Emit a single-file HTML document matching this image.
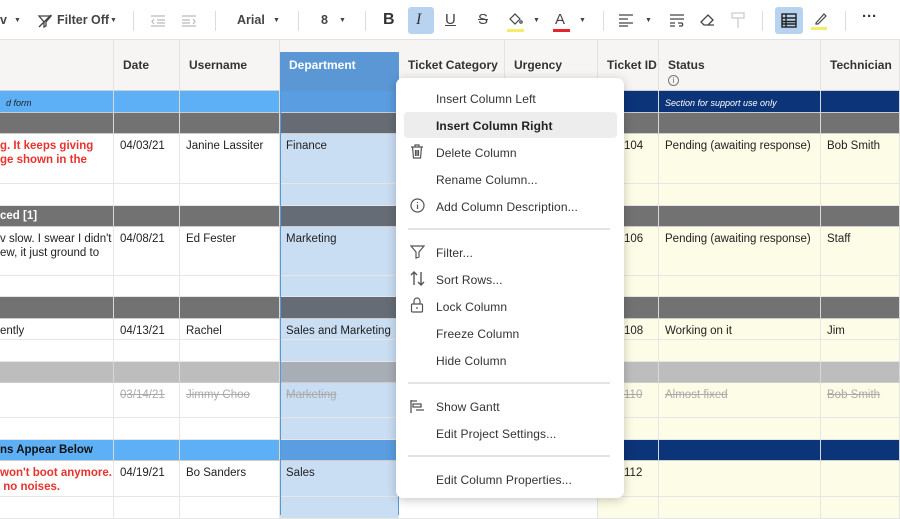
<!DOCTYPE html>
<html><head><meta charset="utf-8"><style>
*{box-sizing:border-box;margin:0;padding:0}
body{width:900px;height:515px;overflow:hidden;background:#fff;font-family:"Liberation Sans",Arial,sans-serif;font-size:12px;color:#222;position:relative}
.a{position:absolute}
.tb{left:0;top:0;width:900px;height:40px;border-bottom:1px solid #e2e2e2;background:#fff}
.tb .a{top:13px;color:#444;font-size:12.5px}
.sep{top:11px!important;width:1px;height:20px;background:#ddd}
.car{font-size:7px!important;top:17px!important;color:#555}
.hdr{left:0;top:40px;width:900px;height:51px;background:#f6f5f3;border-bottom:1px solid #cfcfcf}
.h{position:absolute;top:0;height:51px;border-right:1px solid #e3e3e3;font-weight:bold;color:#333;padding:18px 0 0 9px;font-size:12px}
.row{position:absolute;left:0;width:900px}
.c{position:absolute;top:0;bottom:0;border-right:1px solid #e6e6e6;border-bottom:1px solid #e6e6e6;padding:5px 6px;line-height:14px;white-space:nowrap;overflow:hidden;font-size:11.5px}
.band .c{border-right:1px solid #d8d8d8;border-bottom:1px solid #ccc;font-weight:bold;color:#fff;padding-top:3px}
.y{background:#fdfce6}
.d{background:#c9ddf3}
.st{color:#aaa;text-decoration:line-through}
.tid{padding-left:26px}
.menu{left:396px;top:78px;width:228px;height:420px;background:#fff;border-radius:7px;box-shadow:0 2px 10px rgba(0,0,0,.22)}
.mi{position:absolute;left:40px;font-size:12px;color:#333;letter-spacing:.1px}
.ms{position:absolute;left:12px;width:202px;height:2px;background:#e4e4e4}
.ic{position:absolute;left:14px}
</style></head><body>

<div class="a tb">
<div class="a" style="left:0;font-weight:bold">v</div><div class="a car" style="left:14px">▼</div>
<svg class="a" style="left:37px;top:13px" width="16" height="16" viewBox="0 0 16 16" fill="none" stroke="#444" stroke-width="1.3"><path d="M2 3h12l-5 6v4l-2 1V9z"/><path d="M2 14L14 2"/></svg>
<div class="a" style="left:57px;font-weight:bold">Filter Off</div><div class="a car" style="left:110px">▼</div>
<div class="a sep" style="left:133px"></div>
<svg class="a" style="left:150px;top:14px" width="16" height="14" viewBox="0 0 16 14" fill="none" stroke="#bbb" stroke-width="1.2"><path d="M1 2h14M7 6h8M7 9h8M1 12h14M4 5L2 7.5 4 10"/></svg>
<svg class="a" style="left:181px;top:14px" width="16" height="14" viewBox="0 0 16 14" fill="none" stroke="#bbb" stroke-width="1.2"><path d="M1 2h14M1 6h8M1 9h8M1 12h14M12 5l2 2.5L12 10"/></svg>
<div class="a sep" style="left:215px"></div>
<div class="a" style="left:237px;font-weight:bold">Arial</div><div class="a car" style="left:273px">▼</div>
<div class="a sep" style="left:298px"></div>
<div class="a" style="left:321px;font-weight:bold">8</div><div class="a car" style="left:339px">▼</div>
<div class="a sep" style="left:365px"></div>
<div class="a" style="left:383px;top:11px;font-weight:bold;font-size:16px;color:#333">B</div>
<div class="a" style="left:408px;top:7px;width:26px;height:27px;background:#b8d3f0;border-radius:3px"></div>
<div class="a" style="left:416px;top:11px;font-style:italic;font-size:16px;color:#333;font-family:'Liberation Serif',serif">I</div>
<div class="a" style="left:445px;top:11px;font-size:15px;text-decoration:underline;color:#444">U</div>
<div class="a" style="left:478px;top:11px;font-size:15px;text-decoration:line-through;color:#444">S</div>
<svg class="a" style="left:507px;top:11px" width="18" height="18" viewBox="0 0 18 18" fill="none" stroke="#444" stroke-width="1.2"><path d="M3 8l5-5 5 5-5 5z"/><circle cx="14" cy="11" r="1.2"/></svg>
<div class="a" style="left:507px;top:29px;width:17px;height:3px;background:#f7ec6a"></div>
<div class="a car" style="left:533px">▼</div>
<div class="a" style="left:555px;top:11px;font-size:15px;color:#444">A</div>
<div class="a" style="left:553px;top:29px;width:17px;height:3px;background:#e4252b"></div>
<div class="a car" style="left:579px">▼</div>
<div class="a sep" style="left:603px"></div>
<svg class="a" style="left:618px;top:14px" width="16" height="13" viewBox="0 0 16 13" stroke="#444" stroke-width="1.3"><path d="M1 1h14M1 5h9M1 9h14M1 12h9"/></svg>
<div class="a car" style="left:645px">▼</div>
<svg class="a" style="left:669px;top:14px" width="16" height="13" viewBox="0 0 16 13" fill="none" stroke="#444" stroke-width="1.3"><path d="M1 1h14M1 5h14M1 9h5M1 12h5M9 9h4a2 2 0 0 1 0 3h-3"/></svg>
<svg class="a" style="left:699px;top:12px" width="17" height="16" viewBox="0 0 17 16" fill="none" stroke="#444" stroke-width="1.3"><path d="M2 10l7-7 5 5-5 5H5z M5 13h10"/></svg>
<svg class="a" style="left:731px;top:12px" width="15" height="17" viewBox="0 0 15 17" fill="none" stroke="#ccc" stroke-width="1.3"><rect x="1" y="1" width="12" height="5"/><path d="M7 6v3M7 9v7"/></svg>
<div class="a sep" style="left:762px"></div>
<div class="a" style="left:775px;top:7px;width:28px;height:27px;background:#b8d3f0;border-radius:3px"></div>
<svg class="a" style="left:781px;top:13px" width="16" height="15" viewBox="0 0 16 15" fill="none" stroke="#222" stroke-width="1.4"><rect x="1" y="1" width="14" height="13"/><path d="M1 5h14M1 8.5h14M1 11h14M5 1v13"/></svg>
<svg class="a" style="left:812px;top:11px" width="16" height="15" viewBox="0 0 16 15" fill="none" stroke="#444" stroke-width="1.2"><path d="M4 12L12 3l2 2-8 8H4z"/></svg>
<div class="a" style="left:811px;top:27px;width:16px;height:3px;background:#f7ec6a"></div>
<div class="a sep" style="left:845px"></div>
<div class="a" style="left:862px;top:12px;font-size:15px;font-weight:bold;color:#333;line-height:10px">···</div>
</div>

<div class="a hdr">
<div class="h" style="left:0;width:114px"></div>
<div class="h" style="left:114px;width:66px">Date</div>
<div class="h" style="left:180px;width:100px">Username</div>
<div class="h" style="left:280px;width:119px;background:#5b97d5;color:#fff;top:12px;height:39px;padding-top:6px;border-radius:2px 2px 0 0">Department</div>
<div class="h" style="left:399px;width:106px">Ticket Category</div>
<div class="h" style="left:505px;width:93px">Urgency</div>
<div class="h" style="left:598px;width:61px">Ticket ID</div>
<div class="h" style="left:659px;width:162px">Status<br><span style="display:inline-block;width:11px;height:11px;border:1px solid #777;border-radius:50%;margin-top:3px;font-size:8px;text-align:center;line-height:9px;font-weight:normal;color:#666">i</span></div>
<div class="h" style="left:821px;width:79px">Technician</div>
</div>

<div class="row band" style="top:91px;height:22px">
<div class="c" style="left:0;width:114px;background:#5eb0f6;color:#222;font-style:italic;font-weight:normal;font-size:9px;padding-top:5px">d form</div>
<div class="c" style="left:114px;width:66px;background:#5eb0f6"></div>
<div class="c" style="left:180px;width:100px;background:#5eb0f6"></div>
<div class="c" style="left:280px;width:119px;background:#5a9de0"></div>
<div class="c" style="left:399px;width:199px;background:#5eb0f6"></div>
<div class="c" style="left:598px;width:61px;background:#0c3479"></div>
<div class="c" style="left:659px;width:162px;background:#0c3479;font-style:italic;font-weight:normal;font-size:9px;padding-top:5px">Section for support use only</div>
<div class="c" style="left:821px;width:79px;background:#0c3479"></div>
</div>

<div class="row band" style="top:113px;height:21px">
<div class="c" style="left:0;width:114px;background:#727272"></div><div class="c" style="left:114px;width:66px;background:#727272"></div><div class="c" style="left:180px;width:100px;background:#727272"></div><div class="c" style="left:280px;width:119px;background:#666c75"></div><div class="c" style="left:399px;width:260px;background:#727272"></div><div class="c" style="left:659px;width:162px;background:#727272"></div><div class="c" style="left:821px;width:79px;background:#727272"></div>
</div>

<div class="row" style="top:134px;height:50px">
<div class="c" style="left:0;width:114px;color:#e8332f;font-weight:bold;padding-left:0">g. It keeps giving<br>ge shown in the</div>
<div class="c" style="left:114px;width:66px">04/03/21</div><div class="c" style="left:180px;width:100px">Janine Lassiter</div>
<div class="c d" style="left:280px;width:119px">Finance</div><div class="c" style="left:399px;width:199px"></div>
<div class="c y tid" style="left:598px;width:61px">104</div><div class="c y" style="left:659px;width:162px">Pending (awaiting response)</div><div class="c y" style="left:821px;width:79px">Bob Smith</div>
</div>
<div class="row" style="top:184px;height:22px">
<div class="c" style="left:0;width:114px"></div><div class="c" style="left:114px;width:66px"></div><div class="c" style="left:180px;width:100px"></div><div class="c d" style="left:280px;width:119px"></div><div class="c" style="left:399px;width:199px"></div><div class="c y" style="left:598px;width:61px"></div><div class="c y" style="left:659px;width:162px"></div><div class="c y" style="left:821px;width:79px"></div>
</div>

<div class="row band" style="top:206px;height:21px">
<div class="c" style="left:0;width:114px;background:#727272;padding-left:0">ced [1]</div><div class="c" style="left:114px;width:66px;background:#727272"></div><div class="c" style="left:180px;width:100px;background:#727272"></div><div class="c" style="left:280px;width:119px;background:#666c75"></div><div class="c" style="left:399px;width:260px;background:#727272"></div><div class="c" style="left:659px;width:162px;background:#727272"></div><div class="c" style="left:821px;width:79px;background:#727272"></div>
</div>
<div class="row" style="top:227px;height:49px">
<div class="c" style="left:0;width:114px;padding-left:0">v slow. I swear I didn't<br>ew, it just ground to</div>
<div class="c" style="left:114px;width:66px">04/08/21</div><div class="c" style="left:180px;width:100px">Ed Fester</div>
<div class="c d" style="left:280px;width:119px">Marketing</div><div class="c" style="left:399px;width:199px"></div>
<div class="c y tid" style="left:598px;width:61px">106</div><div class="c y" style="left:659px;width:162px">Pending (awaiting response)</div><div class="c y" style="left:821px;width:79px">Staff</div>
</div>
<div class="row" style="top:276px;height:21px">
<div class="c" style="left:0;width:114px"></div><div class="c" style="left:114px;width:66px"></div><div class="c" style="left:180px;width:100px"></div><div class="c d" style="left:280px;width:119px"></div><div class="c" style="left:399px;width:199px"></div><div class="c y" style="left:598px;width:61px"></div><div class="c y" style="left:659px;width:162px"></div><div class="c y" style="left:821px;width:79px"></div>
</div>

<div class="row band" style="top:297px;height:22px">
<div class="c" style="left:0;width:114px;background:#727272"></div><div class="c" style="left:114px;width:66px;background:#727272"></div><div class="c" style="left:180px;width:100px;background:#727272"></div><div class="c" style="left:280px;width:119px;background:#666c75"></div><div class="c" style="left:399px;width:260px;background:#727272"></div><div class="c" style="left:659px;width:162px;background:#727272"></div><div class="c" style="left:821px;width:79px;background:#727272"></div>
</div>
<div class="row" style="top:319px;height:21px">
<div class="c" style="left:0;width:114px;padding-left:0">ently</div>
<div class="c" style="left:114px;width:66px">04/13/21</div><div class="c" style="left:180px;width:100px">Rachel</div>
<div class="c d" style="left:280px;width:119px">Sales and Marketing</div><div class="c" style="left:399px;width:199px"></div>
<div class="c y tid" style="left:598px;width:61px">108</div><div class="c y" style="left:659px;width:162px">Working on it</div><div class="c y" style="left:821px;width:79px">Jim</div>
</div>
<div class="row" style="top:340px;height:22px">
<div class="c" style="left:0;width:114px"></div><div class="c" style="left:114px;width:66px"></div><div class="c" style="left:180px;width:100px"></div><div class="c d" style="left:280px;width:119px"></div><div class="c" style="left:399px;width:199px"></div><div class="c y" style="left:598px;width:61px"></div><div class="c y" style="left:659px;width:162px"></div><div class="c y" style="left:821px;width:79px"></div>
</div>

<div class="row band" style="top:362px;height:21px">
<div class="c" style="left:0;width:114px;background:#bdbdbd"></div><div class="c" style="left:114px;width:66px;background:#bdbdbd"></div><div class="c" style="left:180px;width:100px;background:#bdbdbd"></div><div class="c" style="left:280px;width:119px;background:#a8aeb6"></div><div class="c" style="left:399px;width:260px;background:#bdbdbd"></div><div class="c" style="left:659px;width:162px;background:#bdbdbd"></div><div class="c" style="left:821px;width:79px;background:#bdbdbd"></div>
</div>
<div class="row" style="top:383px;height:35px">
<div class="c" style="left:0;width:114px"></div>
<div class="c st" style="left:114px;width:66px">03/14/21</div><div class="c st" style="left:180px;width:100px">Jimmy Choo</div>
<div class="c d st" style="left:280px;width:119px">Marketing</div><div class="c" style="left:399px;width:199px"></div>
<div class="c y st tid" style="left:598px;width:61px">110</div><div class="c y st" style="left:659px;width:162px">Almost fixed</div><div class="c y st" style="left:821px;width:79px">Bob Smith</div>
</div>
<div class="row" style="top:418px;height:22px">
<div class="c" style="left:0;width:114px"></div><div class="c" style="left:114px;width:66px"></div><div class="c" style="left:180px;width:100px"></div><div class="c d" style="left:280px;width:119px"></div><div class="c" style="left:399px;width:199px"></div><div class="c y" style="left:598px;width:61px"></div><div class="c y" style="left:659px;width:162px"></div><div class="c y" style="left:821px;width:79px"></div>
</div>

<div class="row band" style="top:440px;height:21px">
<div class="c" style="left:0;width:114px;background:#5eb0f6;color:#111;padding-left:0">ns Appear Below</div>
<div class="c" style="left:114px;width:66px;background:#5eb0f6"></div><div class="c" style="left:180px;width:100px;background:#5eb0f6"></div><div class="c" style="left:280px;width:119px;background:#5a9de0"></div><div class="c" style="left:399px;width:199px;background:#5eb0f6"></div><div class="c" style="left:598px;width:61px;background:#0c3479"></div><div class="c" style="left:659px;width:162px;background:#0c3479"></div><div class="c" style="left:821px;width:79px;background:#0c3479"></div>
</div>
<div class="row" style="top:461px;height:36px">
<div class="c" style="left:0;width:114px;color:#e8332f;font-weight:bold;padding-left:0">won't boot anymore.<br>&nbsp;no noises.</div>
<div class="c" style="left:114px;width:66px">04/19/21</div><div class="c" style="left:180px;width:100px">Bo Sanders</div>
<div class="c d" style="left:280px;width:119px">Sales</div><div class="c" style="left:399px;width:199px"></div>
<div class="c y tid" style="left:598px;width:61px">112</div><div class="c y" style="left:659px;width:162px"></div><div class="c y" style="left:821px;width:79px"></div>
</div>
<div class="row" style="top:497px;height:22px">
<div class="c" style="left:0;width:114px"></div><div class="c" style="left:114px;width:66px"></div><div class="c" style="left:180px;width:100px"></div><div class="c d" style="left:280px;width:119px"></div><div class="c" style="left:399px;width:199px"></div><div class="c y" style="left:598px;width:61px"></div><div class="c y" style="left:659px;width:162px"></div><div class="c y" style="left:821px;width:79px"></div>
</div>

<div class="a" style="left:280px;top:52px;width:1px;height:463px;background:#5b97d5"></div>
<div class="a" style="left:398px;top:52px;width:1px;height:463px;background:#5b97d5"></div>

<div class="a menu">
<div class="mi" style="top:14px">Insert Column Left</div>
<div class="a" style="left:8px;top:34px;width:213px;height:26px;background:#ededed;border-radius:4px"></div>
<div class="mi" style="top:41px;font-weight:bold;color:#222">Insert Column Right</div>
<svg class="ic" style="top:66px" width="14" height="15" viewBox="0 0 14 15" fill="none" stroke="#555" stroke-width="1.2"><path d="M1 3h12M5 3V1h4v2M2.5 3l1 11h7l1-11M5.5 6v6M7 6v6M8.5 6v6"/></svg>
<div class="mi" style="top:68px">Delete Column</div>
<div class="mi" style="top:95px">Rename Column...</div>
<svg class="ic" style="top:120px" width="15" height="15" viewBox="0 0 15 15" fill="none" stroke="#555" stroke-width="1.2"><circle cx="7.5" cy="7.5" r="6.5"/><path d="M7.5 6.5v4.5M7.5 4v1"/></svg>
<div class="mi" style="top:122px">Add Column Description...</div>
<div class="ms" style="top:150px"></div>
<svg class="ic" style="top:166px" width="15" height="15" viewBox="0 0 15 15" fill="none" stroke="#555" stroke-width="1.2"><path d="M1 2h13L9 8v5L6 14V8z"/></svg>
<div class="mi" style="top:168px">Filter...</div>
<svg class="ic" style="top:193px" width="15" height="15" viewBox="0 0 15 15" fill="none" stroke="#555" stroke-width="1.4"><path d="M4 14V1M1 4l3-3 3 3M11 1v13M8 11l3 3 3-3"/></svg>
<div class="mi" style="top:195px">Sort Rows...</div>
<svg class="ic" style="top:219px" width="14" height="16" viewBox="0 0 14 16" fill="none" stroke="#555" stroke-width="1.2"><rect x="1.5" y="7" width="11" height="8" rx="1"/><path d="M4 7V4a3 3 0 0 1 6 0v3M7 10v2"/></svg>
<div class="mi" style="top:222px">Lock Column</div>
<div class="mi" style="top:249px">Freeze Column</div>
<div class="mi" style="top:276px">Hide Column</div>
<div class="ms" style="top:304px"></div>
<svg class="ic" style="top:321px" width="15" height="15" viewBox="0 0 15 15" fill="none" stroke="#555" stroke-width="1.3"><path d="M1 2h6M1 1v13M3 5h8v3H3zM6 11h8"/></svg>
<div class="mi" style="top:322px">Show Gantt</div>
<div class="mi" style="top:349px">Edit Project Settings...</div>
<div class="ms" style="top:377px"></div>
<div class="mi" style="top:395px">Edit Column Properties...</div>
</div>
</body></html>
